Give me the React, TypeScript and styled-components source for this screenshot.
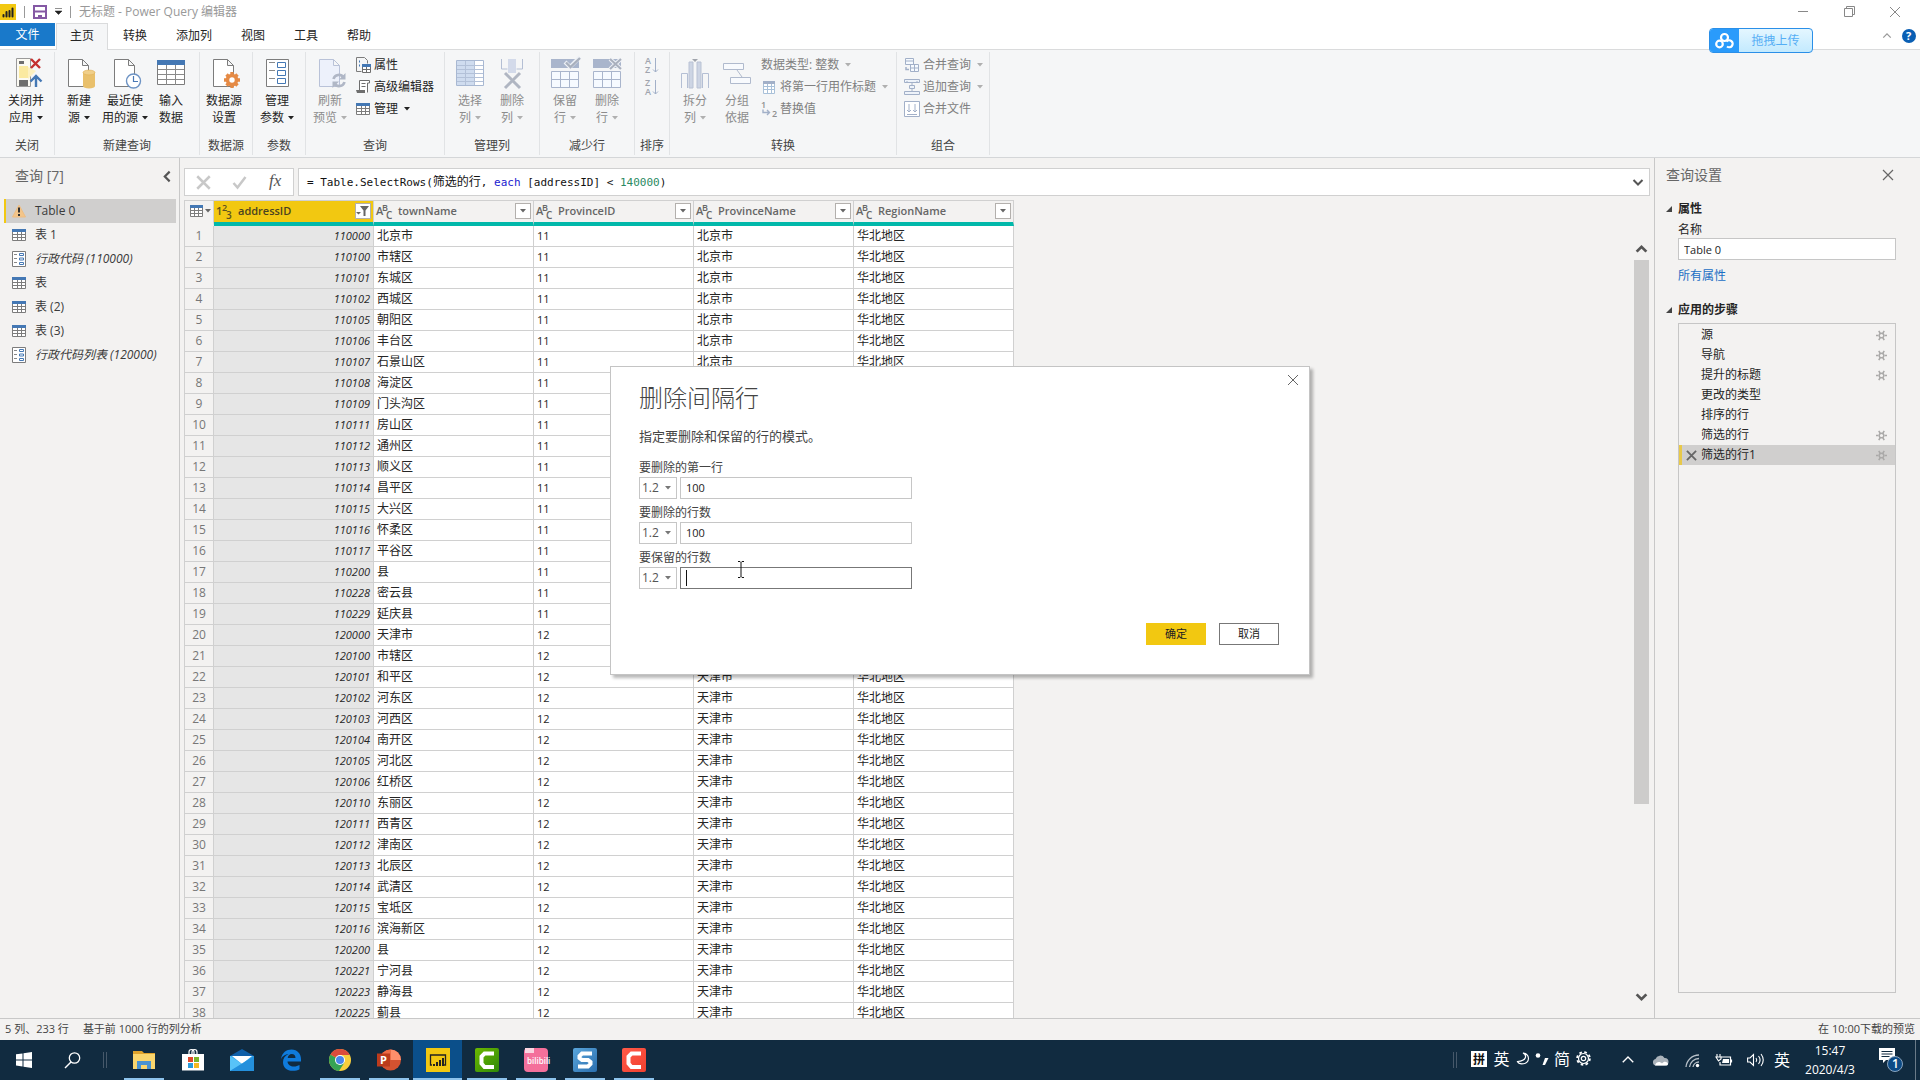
import React from "react";
import styled, { createGlobalStyle, css } from "styled-components";

const SANS = '"Open Sans", "Noto Sans", "Noto Sans CJK SC", sans-serif';
const MONO = '"DejaVu Sans Mono", "Noto Sans CJK SC", monospace';

const Global = createGlobalStyle`
  *, *::before, *::after { box-sizing: border-box; }
  html, body { margin: 0; padding: 0; }
  body { font: 12px/16px ${SANS}; color: #252525; background: #f3f2f1; }
  button, input, select { font: inherit; color: inherit; margin: 0; }
  button { border: 0; padding: 0; background: none; }
  svg { display: block; flex: none; overflow: visible; }
  ul { list-style: none; margin: 0; padding: 0; }
`;

const Screen = styled.div`
  height: 100vh;
  display: flex;
  flex-direction: column;
  overflow: hidden;
`;
const Window = styled.div`
  position: relative;
  flex: 1;
  min-height: 0;
  display: flex;
  flex-direction: column;
`;

/* ---------- title bar ---------- */
const TitleBar = styled.header`
  height: 23px;
  flex: none;
  display: flex;
  align-items: center;
  padding-right: 2px;
  background: #fff;
  color: #999;
`;
const QuickAccess = styled.div`
  display: flex;
  align-items: center;
  gap: 8px;
`;
const Bar = styled.i`
  width: 1px;
  height: 12px;
  background: #999;
`;
const IconButton = styled.button`
  display: grid;
  place-items: center;
  height: 20px;
`;
const WindowTitle = styled.h1`
  margin: 0 0 0 8px;
  flex: 1;
  font-size: 12px;
  font-weight: 400;
`;
const WindowButton = styled.button`
  width: 46px;
  height: 22px;
  display: grid;
  place-items: center;
`;

/* ---------- tabs ---------- */
const Tabs = styled.nav`
  height: 27px;
  flex: none;
  display: flex;
  gap: 1px;
  background: #fff;
  border-bottom: 1px solid #dadbdc;
`;
const Tab = styled.button<{ $kind?: "file" | "active" }>`
  height: 27px;
  padding: 0 14px 2px;
  ${(p) =>
    p.$kind === "file" &&
    css`
      height: 23px;
      width: 55px;
      padding: 0 14px;
      background: #1979ca;
      color: #fff;
    `}
  ${(p) =>
    p.$kind === "active" &&
    css`
      background: #f5f6f7;
      border: 1px solid #dadbdc;
      border-bottom: 0;
      padding: 0 13px 2px;
    `}
`;
const TabsEnd = styled.div`
  margin-left: auto;
  display: flex;
  align-items: center;
  gap: 10px;
  padding-right: 4px;
`;
const UploadWidget = styled.button`
  position: absolute;
  top: 28px;
  right: 107px;
  width: 104px;
  height: 25px;
  display: flex;
  align-items: center;
  border: 1px solid #2a8fe8;
  border-radius: 4px;
  overflow: hidden;
  background: linear-gradient(#e4f6ff, #c3eafe);
  color: #55aef5;
`;
const UploadLogo = styled.span`
  width: 29px;
  height: 100%;
  display: grid;
  place-items: center;
  background: #2a9bfb;
`;
const UploadText = styled.span`
  flex: 1;
`;

/* ---------- ribbon ---------- */
const RibbonBar = styled.section`
  height: 108px;
  flex: none;
  display: flex;
  padding: 2px 0;
  background: #f5f6f7;
  border-bottom: 1px solid #d4d6d8;
`;
const Group = styled.div<{ $w: number }>`
  width: ${(p) => p.$w}px;
  display: flex;
  flex-direction: column;
  justify-content: space-between;
  border-right: 1px solid #e1e3e5;
  padding: 5px 0 1px;
`;
const GroupBody = styled.div<{ $pad: number }>`
  display: flex;
  padding-left: ${(p) => p.$pad}px;
`;
const GroupName = styled.div`
  text-align: center;
  color: #444;
`;
const BigButton = styled.button<{ $w: number; $off?: boolean }>`
  width: ${(p) => p.$w}px;
  display: flex;
  flex-direction: column;
  align-items: center;
  gap: 3px;
  line-height: 17px;
  color: ${(p) => (p.$off ? "#8c8c8c" : "#252525")};
`;
const Line = styled.span`
  display: flex;
  align-items: center;
  justify-content: center;
  gap: 4px;
  white-space: nowrap;
`;
const Stack = styled.div`
  display: flex;
  flex-direction: column;
  padding-left: 3px;
`;
const SmallButton = styled.button<{ $off?: boolean }>`
  height: 22px;
  display: flex;
  align-items: center;
  gap: 3px;
  padding-bottom: 6px;
  white-space: nowrap;
  color: ${(p) => (p.$off ? "#808080" : "#252525")};
  & > span + svg { margin-left: 3px; }
`;

/* ---------- body ---------- */
const Body = styled.div`
  flex: 1;
  min-height: 0;
  display: flex;
  background: #f3f2f1;
`;
const Queries = styled.aside`
  width: 180px;
  flex: none;
  padding: 8px 3px 0 4px;
  border-right: 1px solid #c8c8c8;
`;
const PanelHead = styled.div`
  display: flex;
  align-items: center;
  justify-content: space-between;
`;
const PanelTitle = styled.h2`
  margin: 0;
  font-size: 14px;
  line-height: 20px;
  font-weight: 400;
  color: #666;
`;
const QueryHead = styled(PanelHead)`
  padding: 0 2px 0 11px;
  margin-bottom: 13px;
`;
const QueryItem = styled.button<{ $sel?: boolean; $italic?: boolean }>`
  width: 100%;
  height: 24px;
  display: flex;
  align-items: center;
  gap: 9px;
  padding-left: 6px;
  text-align: left;
  border-left: 2px solid ${(p) => (p.$sel ? "#f2c811" : "transparent")};
  background: ${(p) => (p.$sel ? "#d0cfce" : "transparent")};
  font-style: ${(p) => (p.$italic ? "italic" : "normal")};
  color: #3a3a3a;
  white-space: nowrap;
`;
const Main = styled.main`
  flex: 1;
  min-width: 0;
  display: flex;
  flex-direction: column;
  padding: 10px 4px 0 4px;
`;
const FormulaRow = styled.div`
  flex: none;
  height: 28px;
  display: flex;
  gap: 4px;
`;
const FormulaTools = styled.div`
  width: 110px;
  display: flex;
  align-items: center;
  justify-content: space-around;
  background: #fff;
  border: 1px solid #d0d0d0;
`;
const FormulaBox = styled.div`
  flex: 1;
  display: flex;
  align-items: center;
  justify-content: space-between;
  padding: 0 5px 0 8px;
  background: #fff;
  border: 1px solid #d0d0d0;
`;
const Code = styled.code`
  font: 11px/16px ${MONO};
  color: #111;
  white-space: pre;
`;
const Token = styled.span<{ $c?: string; $cjk?: boolean }>`
  color: ${(p) => p.$c ?? "inherit"};
  font-size: ${(p) => (p.$cjk ? "12px" : "11px")};
`;
const GridRow = styled.div`
  flex: 1;
  min-height: 0;
  margin-top: 4px;
  display: flex;
  justify-content: space-between;
`;
const GridView = styled.div`
  overflow: hidden;
`;
const Grid = styled.table`
  width: 830px;
  table-layout: fixed;
  border-collapse: separate;
  border-spacing: 0;
  border-left: 1px solid #d0d0d0;
`;
const HeadCell = styled.th<{ $sel?: boolean; $corner?: boolean }>`
  width: ${(p) => (p.$corner ? "29px" : "160px")};
  height: 26px;
  padding: 0 2px 2px;
  border-top: 1px solid #d0d0d0;
  border-right: 1px solid #d0d0d0;
  border-bottom: 4px solid ${(p) => (p.$corner ? "#f3f2f1" : "#01b8aa")};
  background: ${(p) => (p.$sel ? "#f2c811" : "#f3f2f1")};
  color: ${(p) => (p.$sel ? "#4a4320" : "#666")};
  font-size: 11px;
  font-weight: 600;
  text-align: left;
`;
const HeadInner = styled.div`
  display: flex;
  align-items: center;
`;
const HeadName = styled.span`
  flex: 1;
  padding-left: 4px;
`;
const FilterButton = styled.button`
  width: 16px;
  height: 16px;
  display: grid;
  place-items: center;
  background: #fff;
  border: 1px solid #b3b0ad;
`;
const NumCell = styled.th`
  height: 21px;
  padding: 0;
  background: #f3f2f1;
  border-right: 1px solid #d0d0d0;
  border-bottom: 1px solid #d0d0d0;
  font-weight: 400;
  line-height: 20px;
  color: #777;
`;
const Cell = styled.td<{ $id?: boolean; $num?: boolean }>`
  height: 21px;
  padding: 0 3px;
  line-height: 20px;
  border-right: 1px solid #d0d0d0;
  border-bottom: 1px solid #d0d0d0;
  background: #fff;
  ${(p) => (p.$id || p.$num) && "font-size: 11px;"}
  ${(p) =>
    p.$id &&
    css`
      background: #e6e6e6;
      text-align: right;
      font-style: italic;
    `}
`;
const ScrollBar = styled.div`
  width: 15px;
  margin-right: 1px;
  padding: 38px 0 11px;
  display: flex;
  flex-direction: column;
`;
const ScrollTrack = styled.div`
  flex: 1;
`;
const ScrollThumb = styled.div`
  height: 75%;
  background: #cdcccb;
`;
const ScrollButton = styled.button`
  height: 22px;
  display: grid;
  place-items: center;
`;

/* ---------- settings panel ---------- */
const Settings = styled.aside`
  width: 266px;
  flex: none;
  display: flex;
  flex-direction: column;
  padding: 7px 24px 25px 11px;
  border-left: 1px solid #c8c8c8;
`;
const SectionTitle = styled.h3<{ $first?: boolean }>`
  display: flex;
  align-items: center;
  gap: 6px;
  margin: ${(p) => (p.$first ? "14px 0 3px" : "0")};
  font-size: 12px;
  line-height: 20px;
  font-weight: 600;
`;
const Section = styled.div`
  display: flex;
  flex-direction: column;
  align-items: flex-start;
  padding-left: 12px;
`;
const NameInput = styled.input`
  width: 100%;
  height: 22px;
  padding: 0 5px;
  border: 1px solid #c6c6c6;
  border-radius: 0;
  background: #fff;
  font-size: 11px;
`;
const Link = styled.a`
  margin: 8px 0 16px;
  color: #1a6fc4;
  text-decoration: none;
`;
const StepsBox = styled.div`
  flex: 1;
  display: flex;
  padding: 3px 0 0 12px;
`;
const Steps = styled.ul`
  flex: 1;
  padding-top: 1px;
  border: 1px solid #c6c6c6;
`;
const Step = styled.li<{ $sel?: boolean }>`
  height: 20px;
  display: flex;
  align-items: center;
  padding: 0 8px 0 4px;
  border-left: 3px solid ${(p) => (p.$sel ? "#e8c94a" : "transparent")};
  background: ${(p) => (p.$sel ? "#d0cfce" : "transparent")};
`;
const StepDelete = styled.span`
  width: 15px;
`;
const StepName = styled.span`
  flex: 1;
`;

const StatusBar = styled.footer`
  height: 22px;
  flex: none;
  display: flex;
  align-items: center;
  gap: 14px;
  padding: 0 5px 1px;
  background: #f3f2f1;
  border-top: 1px solid #c8c8c8;
  font-size: 11px;
  color: #444;
  & > :last-child { margin-left: auto; }
`;

/* ---------- dialog ---------- */
const Overlay = styled.div`
  position: absolute;
  inset: 0;
  display: grid;
  place-items: center;
`;
const Dialog = styled.form`
  position: relative;
  width: 700px;
  padding: 15px 30px 29px 28px;
  background: #fff;
  border: 1px solid #c4c4c4;
  box-shadow: 3px 3px 3px rgba(0, 0, 0, 0.28);
  color: #444;
`;
const DialogClose = styled.button`
  position: absolute;
  top: 4px;
  right: 7px;
  width: 18px;
  height: 18px;
  display: grid;
  place-items: center;
`;
const DialogTitle = styled.h2`
  margin: 0 0 13px;
  font-size: 24px;
  line-height: 32px;
  font-weight: 300;
`;
const DialogText = styled.p`
  margin: 0 0 15px;
  font-size: 13px;
  line-height: 18px;
`;
const Fields = styled.div`
  display: flex;
  flex-direction: column;
  gap: 6px;
`;
const Field = styled.div`
  display: flex;
  flex-direction: column;
  gap: 1px;
`;
const FieldRow = styled.div`
  display: flex;
  gap: 3px;
`;
const Layered = styled.div`
  display: grid;
  align-items: center;
  & > * { grid-area: 1 / 1; }
`;
const TypeSelect = styled.select`
  appearance: none;
  width: 38px;
  height: 22px;
  padding: 0 0 0 2px;
  border: 1px solid #c6c6c6;
  border-radius: 0;
  background: #fff;
  color: #555;
`;
const SelectArrow = styled.span`
  justify-self: end;
  padding-right: 6px;
  pointer-events: none;
`;
const ValueInput = styled.input<{ $focus?: boolean }>`
  width: 232px;
  height: 22px;
  padding: 0 5px;
  border: 1px solid ${(p) => (p.$focus ? "#777" : "#c6c6c6")};
  border-radius: 0;
  background: #fff;
  font-size: 11px;
  color: #222;
`;
const TextCaret = styled.i`
  width: 1px;
  height: 16px;
  margin-left: 6px;
  background: #111;
`;
const Pointer = styled.span`
  position: absolute;
  top: 194px;
  left: 126px;
`;
const Actions = styled.div`
  display: flex;
  justify-content: flex-end;
  gap: 13px;
  margin-top: 34px;
`;
const ActionButton = styled.button<{ $primary?: boolean }>`
  width: 60px;
  height: 22px;
  font-size: 11px;
  color: #222;
  border: 1px solid ${(p) => (p.$primary ? "#f2c811" : "#777")};
  background: ${(p) => (p.$primary ? "#f2c811" : "#fff")};
`;

/* ---------- taskbar ---------- */
const Taskbar = styled.footer`
  height: 40px;
  flex: none;
  display: flex;
  align-items: stretch;
  background: #112b40;
  color: #fff;
`;
const StartButton = styled.button`
  width: 48px;
  display: grid;
  place-items: center;
`;
const Grip = styled.i`
  width: 4px;
  height: 16px;
  align-self: center;
  border: solid #46586a;
  border-width: 0 1px;
`;
const Apps = styled.div`
  display: flex;
  margin-left: 12px;
  flex: 1;
`;
const AppButton = styled.button<{ $run?: boolean; $active?: boolean }>`
  width: 49px;
  display: grid;
  place-items: center;
  background: ${(p) =>
    p.$active
      ? "linear-gradient(#8ec3ec, #8ec3ec) bottom / 100% 2px no-repeat, #0b4f8a"
      : p.$run
      ? "linear-gradient(#8ec3ec, #8ec3ec) bottom / 40px 2px no-repeat"
      : "none"};
`;
const Ime = styled.div`
  display: flex;
  padding: 0 19px 3px 11px;
`;
const TrayItem = styled.button<{ $w: number }>`
  width: ${(p) => p.$w}px;
  display: grid;
  place-items: center;
  font-size: 16px;
  line-height: 20px;
`;
const Clock = styled.div`
  width: 74px;
  text-align: center;
  font-size: 12px;
  line-height: 19px;
  padding-top: 1px;
`;
const ShowDesktop = styled.button`
  width: 5px;
  border-left: 1px solid #6a7a88;
`;

/* ---------- icons ---------- */
const Ico = ({ s = 32, h, v, children }: { s?: number; h?: number; v?: string; children: React.ReactNode }) => (
  <svg width={s} height={h ?? s} viewBox={v ?? `0 0 ${s} ${h ?? s}`} fill="none" aria-hidden="true">
    {children}
  </svg>
);
const Caret = ({ c = "#222" }: { c?: string }) => (
  <svg width="6" height="4" viewBox="0 0 6 4" aria-hidden="true">
    <path d="M0 0h6L3 3.4z" fill={c} />
  </svg>
);
const OFF = "#b0b0b0";
const Page = ({ c = "#7c7c7c", f = "#fff" }) => (
  <path d="M5.5 2.5h14l6 6V29.500h-20zM19.500 2.500v6h6" stroke={c} fill={f} />
);
const I = {
  close: (
    <Ico>
      <path d="M6.500 1.500h14v28h-14z" stroke="#9a9a9a" fill="#fbfaf3" />
      <path d="M9 9h9v12H9z" fill="#fbeaa0" /><path d="M18 10l8 4-8 8z" fill="#fdf1c0" />
      <path d="M9 4h5v3H9zM9 23h9v6H9z" fill="#6e6e6e" />
      <path d="M21 2l9 9M30 2l-9 9" stroke="#c4302f" strokeWidth="2.400" />
      <path d="M26 30V19M20.500 24.500L26 19l5.500 5.500" stroke="#4478b4" strokeWidth="2.400" />
    </Ico>
  ),
  source: (
    <Ico>
      <Page />
      <path d="M20 15h12v14H20z" fill="#e9c06c" /><ellipse cx="26" cy="29" rx="6" ry="2.500" fill="#e9c06c" />
      <ellipse cx="26" cy="15.500" rx="6" ry="2.400" fill="#f0cf8a" stroke="#e0b055" strokeWidth=".6" />
    </Ico>
  ),
  recent: (
    <Ico>
      <Page />
      <circle cx="24.500" cy="24" r="7" fill="#fff" stroke="#6d93c4" strokeWidth="1.400" />
      <path d="M24.500 19v5.500h4.500" stroke="#4a78b5" strokeWidth="1.200" />
    </Ico>
  ),
  enter: (
    <Ico>
      <path d="M2.500 3.500h27v24h-27z" fill="#fff" stroke="#7c7c7c" />
      <path d="M2 3h28v5H2z" fill="#4478b4" />
      <path d="M3 12.500h26M3 17.500h26M3 22.500h26M11.500 8v20M20.500 8v20" stroke="#8a8a8a" />
    </Ico>
  ),
  settings: (
    <Ico>
      <Page />
      <circle cx="24" cy="23" r="4.500" stroke="#e58a45" strokeWidth="3.600" fill="#fff" />
      <path d="M24 15v3M24 28v3M16 23h3M29 23h3M18.500 17.500l2 2M27.500 26.500l2 2M18.500 28.500l2-2M27.500 19.500l2-2" stroke="#e58a45" strokeWidth="3.400" />
    </Ico>
  ),
  params: (
    <Ico>
      <path d="M5.500 2.500h22v27h-22z" fill="#fff" stroke="#7c7c7c" />
      <path d="M8 5.500h6M8 13.500h6M8 21.500h6" stroke="#8a8a8a" />
      <path d="M16.500 5.500h8v5h-8zM16.500 13.500h8v5h-8zM16.500 21.500h8v5h-8z" stroke="#4478b4" />
    </Ico>
  ),
  refresh: (
    <Ico>
      <Page c="#b9c2d8" f="#edf1fb" />
      <path d="M19.500 22a5.500 5.500 0 0 1 10-1.500M30.500 25a5.500 5.500 0 0 1-10 1.500" stroke="#b0b7c6" strokeWidth="2.600" />
      <path d="M31.500 16v6.500H25zM18.500 31v-6.500H25z" fill="#b0b7c6" />
    </Ico>
  ),
  chooseCol: (
    <Ico>
      <path d="M2.500 3.500h27v25h-27z" fill="#fff" stroke="#a8b8d2" />
      <path d="M3 4h18v24H3z" fill="#cfdcef" />
      <path d="M3 8.500h26M3 12.500h26M3 16.500h26M3 20.500h26M3 24.500h26M11.500 4v24M20.500 4v24" stroke="#b3c1d8" />
    </Ico>
  ),
  removeCol: (
    <Ico>
      <path d="M5.500 2v10h6M26.500 2v10h-6" stroke="#b4bfd4" /><path d="M12 2h8v14h-8z" fill="#d3daea" />
      <path d="M9 16l15 15M24 16L9 31" stroke="#b0b6c2" strokeWidth="3" />
    </Ico>
  ),
  keepRows: (
    <Ico>
      <path d="M2 2h28v9H2z" fill="#a9b5cc" /><path d="M2.500 14.500h27v16h-27zM2.500 22.500h27M11.500 14.500v16M20.500 14.500v16" stroke="#a9b5cc" fill="#f6faff" />
      <path d="M16 5l5 5L31 0" stroke="#eef1f6" strokeWidth="4" /><path d="M17 5.500l4.500 4.500L31 1" stroke="#a9b0bd" strokeWidth="2.400" />
    </Ico>
  ),
  removeRows: (
    <Ico>
      <path d="M2 2h28v9H2z" fill="#a9b5cc" /><path d="M2.500 14.500h27v16h-27zM2.500 22.500h27M11.500 14.500v16M20.500 14.500v16" stroke="#a9b5cc" fill="#f6faff" />
      <path d="M19 2l11 10M30 2L19 12" stroke="#eef1f6" strokeWidth="4" /><path d="M19 2l11 10M30 2L19 12" stroke="#a9b0bd" strokeWidth="2" />
    </Ico>
  ),
  split: (
    <Ico>
      <path d="M2.500 31V16.500h6V31M23.500 31V16.500h6V31" stroke="#b4bfd4" /><path d="M10 5h4v26h-4zM18 5h4v26h-4z" fill="#cdd5e4" stroke="#b9c2d4" />
      <path d="M13 2h6l-3 3z" fill="#a0a4ac" />
    </Ico>
  ),
  groupBy: (
    <Ico>
      <path d="M2.500 6.500h20v6h-20zM9.500 20.500h20v6h-20zM16 13l5 7" stroke="#b0bacd" fill="#f8fafd" />
    </Ico>
  ),
};
const GRAYBLUE = "#a2b0c8";
const Small = {
  props: (
    <Ico s={16}>
      <path d="M1.500.500h8l3 3v3M1.500.500v14h5" stroke="#7c7c7c" /><path d="M4 4.500h1M4 8.500h1" stroke="#4478b4" strokeWidth="2" />
      <path d="M7.500 7.500h8v8h-8zM7.500 12.500h8M11.500 10v5" stroke="#6e6e6e" fill="#fff" /><path d="M7 7h9v3H7z" fill="#4478b4" />
    </Ico>
  ),
  editor: (
    <Ico s={16}>
      <path d="M4.500 13V1.500h10V4h-2v9.500M6.500 4.500h4M6.500 7.500h4" stroke="#6e6e6e" fill="#fff" /><path d="M1 11h9v3H2z" fill="#6e6e6e" />
    </Ico>
  ),
  table: (
    <Ico s={14}>
      <path d="M.5 1.500h13v11H.5zM1 6.500h12M1 9.500h12M5.500 4v9M9.500 4v9" stroke="#7c7c7c" fill="#fff" /><path d="M0 1h14v3H0z" fill="#4478b4" />
    </Ico>
  ),
  tableOff: (
    <Ico s={16}>
      <path d="M2.500 2.500h11v12h-11zM2 7.500h12M2 10.500h12M6.500 5v9M10.500 5v9" stroke="#a9c1d9" fill="#fff" /><path d="M2 2h12v3H2z" fill={GRAYBLUE} />
    </Ico>
  ),
  list: (
    <Ico s={14} v="0 0 14 16" h={16}>
      <path d="M.5.500h13v15H.5z" stroke="#7c7c7c" fill="#fff" /><path d="M2 3.500h3M2 7.500h3M2 11.500h3" stroke="#888" />
      <path d="M7.500 2.500h4v2h-4zM7.500 7h4v2h-4zM7.500 11.500h4v2h-4z" stroke="#4478b4" />
    </Ico>
  ),
  merge: (
    <Ico s={16}>
      <path d="M1.500 1.500h8v6h-8zM6.500 7.500h8v7h-8zM6.500 11h8M10.500 8v6M1.500 4h8" stroke={GRAYBLUE} fill="#f6faff" /><path d="M2 10v2.500h3" stroke={GRAYBLUE} strokeWidth="1.500" />
    </Ico>
  ),
  append: (
    <Ico s={16}>
      <path d="M.5.500h15v3H.5zM.5 12.500h15v3H.5zM5.500 6.500h5v3h-5zM8 3v3M8 10v3M3 2v1M13 2v1" stroke={GRAYBLUE} fill="#eef3fa" />
    </Ico>
  ),
  combine: (
    <Ico s={16}>
      <path d="M.5.500h15v15H.5z" stroke={GRAYBLUE} fill="#fff" /><path d="M5 3v8M3 9l2 2 2-2M11 3v8M9 9l2 2 2-2M3 13.500h10" stroke={GRAYBLUE} />
    </Ico>
  ),
  replace: (
    <Ico s={16}>
      <text x="0" y="7" fontSize="9" fontWeight="600" fill="#909090">1</text><text x="11" y="16" fontSize="9" fontWeight="600" fill="#909090">2</text>
      <path d="M2 8.500v3h6M6 9l2.500 2.500L6 14" stroke={GRAYBLUE} strokeWidth="1.400" />
    </Ico>
  ),
};
const Sort = ({ a, b }: { a: string; b: string }) => (
  <Ico s={16} h={16}>
    <text x="1" y="7" fontSize="9" fontWeight="600" fill="#a0a4ae">{a}</text>
    <text x="1" y="16" fontSize="9" fontWeight="600" fill="#a0a4ae">{b}</text>
    <path d="M11.500 1v14M9 12.500l2.500 2.500 2.500-2.500" stroke={GRAYBLUE} />
  </Ico>
);
const TypeIcon = ({ t, c }: { t: string; c: string }) => (
  <Ico s={18} h={18}>
    <g fill={c} fontWeight="600">
      <text x="0" y="13" fontSize="11">{t[0]}</text>
      <text x="6" y="9" fontSize="9">{t[1]}</text>
      <text x="10" y="17" fontSize="10">{t[2]}</text>
    </g>
  </Ico>
);
const X = ({ s = 12, c = "#666", w = 1 }) => (
  <svg width={s} height={s} viewBox="0 0 12 12" aria-hidden="true"><path d="M1 1l10 10M11 1L1 11" stroke={c} strokeWidth={w} /></svg>
);
const Chevron = ({ r = 0, s = 12, c = "#555", w = 2 }) => (
  <svg width={s} height={s} viewBox="0 0 12 12" aria-hidden="true">
    <path d="M1.500 4L6 8.500 10.500 4" fill="none" stroke={c} strokeWidth={w} transform={`rotate(${r} 6 6)`} />
  </svg>
);
const Gear = () => (
  <svg width="11" height="11" viewBox="0 0 11 11" aria-hidden="true">
    <g stroke="#aaa9a8" fill="none"><circle cx="5.500" cy="5.500" r="2.300" strokeWidth="1.400" />
    <path d="M0 5.500h2.500M8.500 5.500H11M2.800.8l1.400 2.500M6.800 7.700l1.400 2.500M8.200.8L6.800 3.300M4.200 7.700l-1.400 2.500" strokeWidth="1.600" /></g>
  </svg>
);
const Triangle = () => (
  <svg width="6" height="6" viewBox="0 0 6 6" aria-hidden="true"><path d="M6 0v6H0z" fill="#444" /></svg>
);
const Bars = ({ s = 16 }) => (
  <svg width={s} height={s} viewBox="0 0 16 16" aria-hidden="true">
    <path d="M0 0h16v16H0z" fill="#f2c811" />
    <path d="M3.500 12.500v-1.500M6.500 12.500V8M9.500 12.500V7M12.500 12.500V4.500" stroke="#222" strokeWidth="2" strokeLinecap="round" />
  </svg>
);

/* ---------- data ---------- */
type Q = [React.ReactNode, string, boolean?];
const warn = (
  <Ico s={14}><path d="M7 1l6.500 12H.5z" fill="#f3c58a" stroke="#eebd82" strokeLinejoin="round" /><path d="M7 3.500v5M7 10v2" stroke="#333" strokeWidth="2" /></Ico>
);
const queries: Q[] = [
  [warn, "Table 0"],
  [Small.table, "表 1"],
  [Small.list, "行政代码 (110000)", true],
  [Small.table, "表"],
  [Small.table, "表 (2)"],
  [Small.table, "表 (3)"],
  [Small.list, "行政代码列表 (120000)", true],
];
const steps: [string, boolean][] = [
  ["源", true], ["导航", true], ["提升的标题", true], ["更改的类型", false],
  ["排序的行", false], ["筛选的行", true], ["筛选的行1", true],
];
const towns =
  "110000 北京市,110100 市辖区,110101 东城区,110102 西城区,110105 朝阳区,110106 丰台区,110107 石景山区,110108 海淀区,110109 门头沟区,110111 房山区,110112 通州区,110113 顺义区,110114 昌平区,110115 大兴区,110116 怀柔区,110117 平谷区,110200 县,110228 密云县,110229 延庆县,120000 天津市,120100 市辖区,120101 和平区,120102 河东区,120103 河西区,120104 南开区,120105 河北区,120106 红桥区,120110 东丽区,120111 西青区,120112 津南区,120113 北辰区,120114 武清区,120115 宝坻区,120116 滨海新区,120200 县,120221 宁河县,120223 静海县,120225 蓟县"
    .split(",")
    .map((r) => r.split(" "));
const columns = ["addressID", "townName", "ProvinceID", "ProvinceName", "RegionName"];
const fields = [
  { id: "first", label: "要删除的第一行", value: "100" },
  { id: "remove", label: "要删除的行数", value: "100" },
  { id: "keep", label: "要保留的行数", value: "", focus: true },
];

const Big = ({ icon, a, b, w = 44, drop, off }: { icon: React.ReactNode; a: string; b: string; w?: number; drop?: boolean; off?: boolean }) => (
  <BigButton $w={w} $off={off}>
    {icon}
    <span>
      <Line>{a}</Line>
      <Line>{b}{drop && <Caret c={off ? OFF : "#222"} />}</Line>
    </span>
  </BigButton>
);
const SmallB = ({ icon, t, drop, off }: { icon?: React.ReactNode; t: string; drop?: boolean; off?: boolean }) => (
  <SmallButton $off={off}>
    {icon}
    <span>{t}</span>
    {drop && <Caret c={off ? OFF : "#222"} />}
  </SmallButton>
);
const RGroup = ({ w, name, pad = 2, children }: { w: number; name: string; pad?: number; children: React.ReactNode }) => (
  <Group $w={w}>
    <GroupBody $pad={pad}>{children}</GroupBody>
    <GroupName>{name}</GroupName>
  </Group>
);

const Ribbon = () => (
  <RibbonBar>
    <RGroup w={55} name="关闭"><Big icon={I.close} a="关闭并" b="应用" w={48} drop /></RGroup>
    <RGroup w={145} name="新建查询">
      <Big icon={I.source} a="新建" b="源" drop />
      <Big icon={I.recent} a="最近使" b="用的源" w={48} drop />
      <Big icon={I.enter} a="输入" b="数据" />
    </RGroup>
    <RGroup w={53} name="数据源"><Big icon={I.settings} a="数据源" b="设置" /></RGroup>
    <RGroup w={53} name="参数"><Big icon={I.params} a="管理" b="参数" drop /></RGroup>
    <RGroup w={139} name="查询">
      <Big icon={I.refresh} a="刷新" b="预览" drop off />
      <Stack>
        <SmallB icon={Small.props} t="属性" />
        <SmallB icon={Small.editor} t="高级编辑器" />
        <SmallB icon={<Ico s={16} v="-1 -1 16 16">{Small.table}</Ico>} t="管理" drop />
      </Stack>
    </RGroup>
    <RGroup w={95} name="管理列" pad={4}>
      <Big icon={I.chooseCol} a="选择" b="列" w={42} drop off />
      <Big icon={I.removeCol} a="删除" b="列" w={42} drop off />
    </RGroup>
    <RGroup w={95} name="减少行" pad={4}>
      <Big icon={I.keepRows} a="保留" b="行" w={42} drop off />
      <Big icon={I.removeRows} a="删除" b="行" w={42} drop off />
    </RGroup>
    <RGroup w={35} name="排序" pad={6}>
      <Stack>
        <SmallButton $off aria-label="升序"><Sort a="A" b="Z" /></SmallButton>
        <SmallButton $off aria-label="降序"><Sort a="Z" b="A" /></SmallButton>
      </Stack>
    </RGroup>
    <RGroup w={227} name="转换" pad={4}>
      <Big icon={I.split} a="拆分" b="列" w={42} drop off />
      <Big icon={I.groupBy} a="分组" b="依据" w={42} off />
      <Stack>
        <SmallB t="数据类型: 整数" drop off />
        <SmallB icon={Small.tableOff} t="将第一行用作标题" drop off />
        <SmallB icon={Small.replace} t="替换值" off />
      </Stack>
    </RGroup>
    <RGroup w={93} name="组合" pad={4}>
      <Stack>
        <SmallB icon={Small.merge} t="合并查询" drop off />
        <SmallB icon={Small.append} t="追加查询" drop off />
        <SmallB icon={Small.combine} t="合并文件" off />
      </Stack>
    </RGroup>
  </RibbonBar>
);

const DataGrid = () => (
  <Grid>
    <thead>
      <tr>
        <HeadCell $corner>
          <HeadInner>
            <Ico s={18} h={14}>
              <path d="M3.500 1.500h12v11h-12zM4 6.500h12M4 9.500h12M7.500 4v9M11.500 4v9" stroke="#7c7c7c" fill="#fff" />
              <path d="M3 1h13v3H3z" fill="#4478b4" />
            </Ico>
            <Caret c="#666" />
          </HeadInner>
        </HeadCell>
        {columns.map((c, i) => (
          <HeadCell key={c} $sel={i === 0}>
            <HeadInner>
              <TypeIcon t={i ? "ABC" : "123"} c={i ? "#666" : "#5c5220"} />
              <HeadName>{c}</HeadName>
              <FilterButton aria-label={`筛选 ${c}`}>
                {i ? (
                  <Caret c="#666" />
                ) : (
                  <Ico s={14}><path d="M4 2h9L9.500 6.500V12h-2V6.500zM0 8h5L2.500 10.500z" fill="#666" /></Ico>
                )}
              </FilterButton>
            </HeadInner>
          </HeadCell>
        ))}
      </tr>
    </thead>
    <tbody>
      {towns.map(([id, name], i) => {
        const bj = id < "120000";
        return (
          <tr key={id}>
            <NumCell scope="row">{i + 1}</NumCell>
            <Cell $id>{id}</Cell>
            <Cell>{name}</Cell>
            <Cell $num>{bj ? "11" : "12"}</Cell>
            <Cell>{bj ? "北京市" : "天津市"}</Cell>
            <Cell>华北地区</Cell>
          </tr>
        );
      })}
    </tbody>
  </Grid>
);

const SettingsPanel = () => (
  <Settings>
    <PanelHead>
      <PanelTitle>查询设置</PanelTitle>
      <IconButton aria-label="关闭"><Ico s={16}><path d="M3 3l10 10M13 3L3 13" stroke="#666" strokeWidth="1.200" /></Ico></IconButton>
    </PanelHead>
    <SectionTitle $first><Triangle />属性</SectionTitle>
    <Section>
      <label htmlFor="query-name">名称</label>
      <NameInput id="query-name" defaultValue="Table 0" />
      <Link href="#props">所有属性</Link>
    </Section>
    <SectionTitle><Triangle />应用的步骤</SectionTitle>
    <StepsBox>
      <Steps>
        {steps.map(([s, gear], i) => (
          <Step key={s} $sel={i === 6}>
            <StepDelete>{i === 6 && <X s={11} w={2} c="#666" />}</StepDelete>
            <StepName>{s}</StepName>
            {gear && <Gear />}
          </Step>
        ))}
      </Steps>
    </StepsBox>
  </Settings>
);

const RemoveRowsDialog = () => (
  <Overlay>
    <Dialog role="dialog" aria-labelledby="dlg-title" onSubmit={(e) => e.preventDefault()}>
      <DialogClose type="button" aria-label="关闭"><X s={12} /></DialogClose>
      <DialogTitle id="dlg-title">删除间隔行</DialogTitle>
      <DialogText>指定要删除和保留的行的模式。</DialogText>
      <Fields>
        {fields.map((f) => (
          <Field key={f.id}>
            <label htmlFor={f.id}>{f.label}</label>
            <FieldRow>
              <Layered>
                <TypeSelect aria-label={`${f.label}类型`}><option>1.2</option></TypeSelect>
                <SelectArrow><Caret c="#777" /></SelectArrow>
              </Layered>
              <Layered>
                <ValueInput id={f.id} defaultValue={f.value} $focus={f.focus} />
                {f.focus && <TextCaret />}
              </Layered>
            </FieldRow>
          </Field>
        ))}
      </Fields>
      <Actions>
        <ActionButton type="submit" $primary>确定</ActionButton>
        <ActionButton type="button">取消</ActionButton>
      </Actions>
      <Pointer>
        <svg width="8" height="17" viewBox="0 0 8 17"><path d="M1 .5h2l1 1 1-1h2M4 1.500v14M1 16.500h2l1-1 1 1h2" stroke="#111" fill="none" /></svg>
      </Pointer>
    </Dialog>
  </Overlay>
);

const Rec = ({ bg, d, name }: { bg: [string, string]; d: string; name: string }) => (
  <Ico s={24}>
    <defs><linearGradient id={name} x1="0" y1="0" x2="1" y2="1"><stop stopColor={bg[0]} /><stop offset="1" stopColor={bg[1]} /></linearGradient></defs>
    <rect width="24" height="24" rx="2" fill={`url(#${name})`} />
    <path d={d} stroke="#fff" strokeWidth="4" />
  </Ico>
);
const C_SHAPE = "M19 5.500H9.500L6.500 8.500v7l3 3.500H19";
const apps: { name: string; run?: boolean; active?: boolean; icon: React.ReactNode }[] = [
  { name: "文件资源管理器", run: true, icon: (
    <Ico s={24} v="0 0 24 24"><path d="M1 3h9l2 2h11v16H1z" fill="#e0a32c" /><path d="M1 6h22v15H1z" fill="#fbd66d" /><path d="M5 13h14v8h-4v-4h-6v4H5z" fill="#4a93d2" /></Ico>
  ) },
  { name: "Store", icon: (
    <Ico s={24}><path d="M8 6V4a2.500 2.500 0 0 1 5 0v2M11 6V4a2.500 2.500 0 0 1 5 0v2" stroke="#fff" strokeWidth="1.200" /><path d="M1 6h22v16.500H1z" fill="#fff" /><path d="M7 9h5v5H7z" fill="#e0492c" /><path d="M13 9h5v5h-5z" fill="#7cb529" /><path d="M7 15h5v5H7z" fill="#2a9bdb" /><path d="M13 15h5v5h-5z" fill="#f6b820" /></Ico>
  ) },
  { name: "邮件", icon: (
    <Ico s={24}><path d="M0 8L12 1l12 7v5H0z" fill="#0f5fa8" /><path d="M0 8h24v15H0z" fill="#38a9ee" /><path d="M2 8h20l-10 8z" fill="#fff" /><path d="M0 8l12 8L0 23z" fill="#58c3f8" /><path d="M24 8L0 23h24z" fill="#2490dc" /></Ico>
  ) },
  { name: "Edge", icon: (
    <Ico s={24}><path d="M2 11C3 4.500 7.500 1.500 12.500 1.500c6 0 9.500 4.500 9.500 9.500v2.500H8.500c.3 3.500 3 5 6.300 5 2.200 0 4.200-.6 5.700-1.500v4.200c-1.700 1-4 1.600-6.700 1.600-6 0-9.800-3.500-9.800-8.600 0-3.700 2-6.700 5.500-8.200C5 6.700 3.300 8.700 2 11zM8.700 10h7.800c0-2.400-1.400-3.900-3.700-3.900S9 7.800 8.700 10z" fill="#0f7bdc" /></Ico>
  ) },
  { name: "Chrome", run: true, icon: (
    <Ico s={24}><circle cx="12" cy="12" r="11" fill="#f8cf3c" /><path d="M12 12L2.500 6.500A11 11 0 0 0 11 23l5.500-8.500z" fill="#36a355" /><path d="M12 12L2.500 6.500A11 11 0 0 1 21.700 7H12z" fill="#dc4c3d" /><circle cx="12" cy="12" r="5" fill="#fff" /><circle cx="12" cy="12" r="4" fill="#4a86ec" /></Ico>
  ) },
  { name: "PowerPoint", run: true, icon: (
    <Ico s={24}><circle cx="13.500" cy="12" r="10.500" fill="#d35230" /><path d="M13.500 1.500A10.500 10.500 0 0 1 24 12H13.500z" fill="#ff8f6b" /><path d="M3 12a10.500 10.500 0 0 1 10.500-10.500V12z" fill="#ed6c47" /><path d="M0 5.500h13v13H0z" fill="#bc3b1c" /><text x="3" y="16" fontSize="11" fontWeight="700" fill="#fff">P</text></Ico>
  ) },
  { name: "Power BI", run: true, active: true, icon: (
    <Ico s={24}><path d="M0 0h24v24H0z" fill="#f2c811" /><path d="M6 17H4.500V7h15v10H18" stroke="#222" strokeWidth="1.300" /><path d="M8 18v-2M11 18v-4M14 18v-6M17 18v-8" stroke="#222" strokeWidth="2" /></Ico>
  ) },
  { name: "Camtasia", run: true, icon: <Rec name="green" bg={["#6cb800", "#2f8a08"]} d={C_SHAPE} /> },
  { name: "bilibili", run: true, icon: (
    <Ico s={24}><rect width="24" height="24" rx="4" fill="#f4709b" /><path d="M1 0h9v5H1z" fill="#fbd5e1" /><text x="3" y="16" fontSize="8" fontWeight="600" fill="#fff">bilibili</text></Ico>
  ) },
  { name: "Snagit", run: true, icon: <Rec name="blue" bg={["#5aa6dc", "#2a6eae"]} d="M19 5.500H9L6.500 8v2L9 12h6l2.500 2v2L15 18.500H5" /> },
  { name: "Recorder", run: true, icon: <Rec name="red" bg={["#ff5a48", "#f2402f"]} d={C_SHAPE} /> },
];

const TaskbarView = () => (
  <Taskbar>
    <StartButton aria-label="开始"><Ico s={16}><path d="M0 2.300L6.500 1.400v6H0zM7.500 1.200L16 0v7.400H7.500zM0 8.500h6.500v6L0 13.600zM7.500 8.500H16V16l-8.500-1.200z" fill="#fff" /></Ico></StartButton>
    <StartButton aria-label="搜索"><Ico s={17}><circle cx="10.500" cy="6" r="5.200" stroke="#fff" strokeWidth="1.300" /><path d="M7 10l-6 6" stroke="#fff" strokeWidth="1.400" /></Ico></StartButton>
    <TaskGap><Grip /></TaskGap>
    <Apps>
      {apps.map((a) => (
        <AppButton key={a.name} aria-label={a.name} $run={a.run} $active={a.active}>{a.icon}</AppButton>
      ))}
    </Apps>
    <Grip />
    <Ime>
      <TrayItem $w={22} aria-label="拼音"><Ico s={16}><path d="M0 0h16v16H0z" fill="#fff" /><text x="2" y="13" fontSize="12" fontWeight="700" fill="#111">拼</text></Ico></TrayItem>
      <TrayItem $w={23}>英</TrayItem>
      <TrayItem $w={20} aria-label="半角"><Ico s={14}><path d="M7 1c4 2 4 8-5.500 8.500C3 13 12 13 12.500 6.500 12.500 3 9.500 1 7 1z" stroke="#fff" strokeWidth="1.200" /></Ico></TrayItem>
      <TrayItem $w={18} aria-label="标点"><Ico s={14}><circle cx="3" cy="3.500" r="2.300" fill="#fff" /><path d="M10 6h3.500L10 13H7.500z" fill="#fff" /></Ico></TrayItem>
      <TrayItem $w={22}>简</TrayItem>
      <TrayItem $w={20} aria-label="设置"><Ico s={15}><circle cx="7.500" cy="7.500" r="2.200" stroke="#fff" strokeWidth="1.200" /><circle cx="7.500" cy="7.500" r="5" stroke="#fff" strokeWidth="1.200" /><circle cx="7.500" cy="7.500" r="6.400" stroke="#fff" strokeWidth="1.800" strokeDasharray="2.600 2.430" /></Ico></TrayItem>
    </Ime>
    <TrayItem $w={32} aria-label="显示隐藏的图标"><Chevron r={180} s={14} c="#fff" w={1.2} /></TrayItem>
    <TrayItem $w={32} aria-label="OneDrive"><Ico s={16} h={12}><path d="M4 11.500a3.300 3.300 0 0 1-.5-6.500A5 5 0 0 1 12.500 4a3.700 3.700 0 0 1 .5 7.500z" fill="#aab2ba" /><path d="M3 11.500c1-4 5-4.500 7-2 2-3 6-1.500 6 .5 0 1-1 1.500-2 1.500z" fill="#fff" /></Ico></TrayItem>
    <TrayItem $w={32} aria-label="网络"><Ico s={15}><path d="M1 14A13 13 0 0 1 14 2M4.500 14A9.500 9.500 0 0 1 14 5.500M8 14a6 6 0 0 1 6-5" stroke="#b7c0c8" strokeWidth="1.300" /><circle cx="12.500" cy="12.500" r="1.700" fill="#fff" /></Ico></TrayItem>
    <TrayItem $w={32} aria-label="电池"><Ico s={16} h={12}><path d="M5 3h9.500v8H4V8M15.500 5.500v3" stroke="#fff" strokeWidth="1.200" /><path d="M7 5h6v4H6z" fill="#fff" /><path d="M1 0v3M4 0v3M0 3h5v2L2.500 7z" stroke="#fff" strokeWidth="1.100" /></Ico></TrayItem>
    <TrayItem $w={31} aria-label="音量"><Ico s={17} h={14}><path d="M.600 5v4H3l3.500 3.500v-11L3 5zM9 5c1 1.300 1 2.700 0 4M11.500 3c2 2.500 2 5.500 0 8M14 1c3 4 3 8 0 12" stroke="#fff" strokeWidth="1.100" /></Ico></TrayItem>
    <TrayItem $w={22}>英</TrayItem>
    <Clock>15:47<br />2020/4/3</Clock>
    <TrayItem $w={48} aria-label="通知">
      <Ico s={24}><path d="M0 0h16v12H7l-3 3v-3H0z" fill="#fff" /><path d="M2.500 3.500h11M2.500 6h11M2.500 8.500h8" stroke="#112b40" /><circle cx="16" cy="16" r="7.500" fill="#0c4a85" stroke="#8aa5bf" /><text x="13" y="20" fontSize="12" fontWeight="600" fill="#fff">1</text></Ico>
    </TrayItem>
    <ShowDesktop aria-label="显示桌面" />
  </Taskbar>
);
const TaskGap = styled.span`
  display: flex;
  padding: 0 0 0 7px;
`;

export default function App() {
  return (
    <Screen>
      <Global />
      <Window>
        <TitleBar>
          <QuickAccess>
            <Bars />
            <Bar />
            <IconButton aria-label="保存"><Ico s={14}><path d="M1 1h12v12H1z" stroke="#8458a4" strokeWidth="2" fill="#fff" /><path d="M1 6.500h12" stroke="#8458a4" strokeWidth="2" /><path d="M5 10h4v3H5z" fill="#8458a4" /></Ico></IconButton>
            <IconButton aria-label="自定义快速访问工具栏"><Ico s={7} h={7}><path d="M0 .5h7M0 3h7L3.500 6.500z" fill="#222" stroke="#222" strokeWidth=".5" /></Ico></IconButton>
            <Bar />
          </QuickAccess>
          <WindowTitle>无标题 - Power Query 编辑器</WindowTitle>
          <WindowButton aria-label="最小化"><Ico s={10}><path d="M0 4.500h10" stroke="#888" /></Ico></WindowButton>
          <WindowButton aria-label="还原"><Ico s={11}><path d="M.5 2.500h8v8h-8zM2.500 2V.5h8v8H9" stroke="#888" /></Ico></WindowButton>
          <WindowButton aria-label="关闭"><X s={12} c="#888" /></WindowButton>
        </TitleBar>
        <Tabs>
          <Tab $kind="file">文件</Tab>
          <Tab $kind="active">主页</Tab>
          <Tab>转换</Tab>
          <Tab>添加列</Tab>
          <Tab>视图</Tab>
          <Tab>工具</Tab>
          <Tab>帮助</Tab>
          <TabsEnd>
            <IconButton aria-label="折叠功能区"><Chevron r={180} s={10} c="#999" w={1.5} /></IconButton>
            <IconButton aria-label="帮助"><Ico s={14}><circle cx="7" cy="7" r="7" fill="#0a5fb4" /><text x="4" y="11" fontSize="11" fontWeight="700" fill="#fff">?</text></Ico></IconButton>
          </TabsEnd>
        </Tabs>
        <Ribbon />
        <Body>
          <Queries>
            <QueryHead>
              <PanelTitle>查询 [7]</PanelTitle>
              <IconButton aria-label="折叠"><Chevron r={90} s={13} /></IconButton>
            </QueryHead>
            {queries.map(([icon, name, italic], i) => (
              <QueryItem key={name} $sel={i === 0} $italic={italic}>{icon}{name}</QueryItem>
            ))}
          </Queries>
          <Main>
            <FormulaRow>
              <FormulaTools>
                <IconButton aria-label="取消"><X s={15} c="#c8c8c8" w={2} /></IconButton>
                <IconButton aria-label="确认"><Ico s={15}><path d="M1.500 8L5.500 12.500 13.500 2" stroke="#c8c8c8" strokeWidth="2.500" /></Ico></IconButton>
                <IconButton aria-label="公式"><Ico s={14} h={18}><text x="1" y="13" fontSize="17" fontStyle="italic" fontFamily="Liberation Serif" fill="#555">fx</text></Ico></IconButton>
              </FormulaTools>
              <FormulaBox>
                <Code>
                  = Table.SelectRows(<Token $cjk>筛选的行</Token>, <Token $c="#1a1ad0">each</Token> [addressID] &lt; <Token $c="#2b8a62">140000</Token>)
                </Code>
                <IconButton aria-label="展开"><Chevron s={12} /></IconButton>
              </FormulaBox>
            </FormulaRow>
            <GridRow>
              <GridView><DataGrid /></GridView>
              <ScrollBar>
                <ScrollButton aria-label="向上滚动"><Chevron r={180} s={13} w={2.5} /></ScrollButton>
                <ScrollTrack><ScrollThumb /></ScrollTrack>
                <ScrollButton aria-label="向下滚动"><Chevron s={13} w={2.5} /></ScrollButton>
              </ScrollBar>
            </GridRow>
          </Main>
          <SettingsPanel />
        </Body>
        <StatusBar>
          <span>5 列、233 行</span>
          <span>基于前 1000 行的列分析</span>
          <span>在 10:00下载的预览</span>
        </StatusBar>
        <UploadWidget>
          <UploadLogo><Ico s={19} h={16}><circle cx="9.500" cy="4.500" r="3.500" stroke="#fff" strokeWidth="2.200" /><circle cx="4.500" cy="11" r="3.300" stroke="#fff" strokeWidth="2.200" /><path d="M11.500 8.500a3.500 3.500 0 1 1 .500 5" stroke="#fff" strokeWidth="2.200" /></Ico></UploadLogo>
          <UploadText>拖拽上传</UploadText>
        </UploadWidget>
        <RemoveRowsDialog />
      </Window>
      <TaskbarView />
    </Screen>
  );
}
